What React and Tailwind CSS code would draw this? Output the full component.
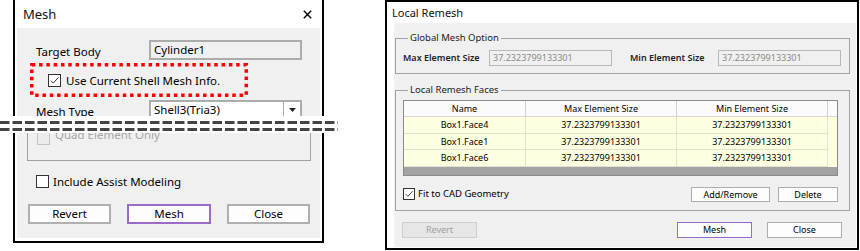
import React from "react";

function Check({ checked = false, disabled = false, size = 13 }) {
  return (
    <div
      className={`shrink-0 flex items-center justify-center border ${
        disabled ? "border-[#c4c4c4] bg-[#ececec]" : "border-[#333333] bg-white"
      }`}
      style={{ width: size, height: size }}
    >
      {checked && (
        <svg width={size - 2} height={size - 2} viewBox="0 0 11 11">
          <path d="M1.8 5.6 L4.3 8.1 L9.4 2.4" fill="none" stroke="#333" strokeWidth="1" />
        </svg>
      )}
    </div>
  );
}

function LButton({ children, purple = false, w }) {
  return (
    <div
      className={`h-[20px] flex items-center justify-center bg-[#fdfdfd] border-2 text-[11.5px] ${
        purple ? "border-[#9a6cc8]" : "border-[#b0b0b0]"
      }`}
      style={{ width: w }}
    >
      {children}
    </div>
  );
}

function RButton({ children, purple = false, disabled = false, w = 75, h = 16 }) {
  return (
    <div
      className={`flex items-center justify-center border text-[9px] ${
        disabled
          ? "border-[#cfcfcf] bg-[#e6e6e6] text-[#a0a0a0]"
          : purple
          ? "border-[#9a6cc8] bg-[#fdfdfd] text-black"
          : "border-[#adadad] bg-[#fdfdfd] text-black"
      }`}
      style={{ width: w, height: h }}
    >
      {children}
    </div>
  );
}

const VAL = "37.2323799133301";
const rows = [
  { name: "Box1.Face4", h: 17 },
  { name: "Box1.Face1", h: 16 },
  { name: "Box1.Face6", h: 17 },
];

export default function App() {
  return (
    <div className="w-[860px] h-[251px] bg-white flex font-['Noto_Sans',sans-serif] text-black overflow-hidden">
      {/* LEFT: Mesh dialog cut in two */}
      <div className="w-[340px] shrink-0 flex flex-col relative">
        {/* upper part */}
        <div className="ml-[13px] w-[311px] h-[116px] border-x-2 border-black px-[2px] flex flex-col">
          <div className="h-[28px] shrink-0 flex items-center justify-between pl-[6px] pr-[8px]">
            <span className="text-[13px] leading-none text-[#111]">Mesh</span>
            <svg width="9" height="9" viewBox="0 0 9 9">
              <path d="M0.8 0.8 L8.2 8.2 M8.2 0.8 L0.8 8.2" stroke="#000" strokeWidth="1.4" />
            </svg>
          </div>
          <div className="flex-1 bg-[#f0f0f0] overflow-hidden flex flex-col text-[11.5px]">
            <div className="mt-[12px] h-[20px] flex items-center pl-[19px]">
              <span className="w-[113px] mt-[4px]">Target Body</span>
              <div className="w-[153px] h-[20px] border-2 border-[#acacac] bg-[#f0f0f0] flex items-center pl-[3px]">
                Cylinder1
              </div>
            </div>
            <div className="mt-[14px] h-[13px] flex items-center pl-[31px] gap-[5px]">
              <Check checked />
              <span>Use Current Shell Mesh Info.</span>
            </div>
            <div className="mt-[13px] h-[20px] flex items-start pl-[19px]">
              <span className="w-[113px] mt-[3px]">Mesh Type</span>
              <div className="w-[153px] h-[20px] border-2 border-[#acacac] bg-white flex items-center">
                <span className="flex-1 pl-[3px]">Shell3(Tria3)</span>
                <div className="w-[17px] h-full border-l border-[#acacac] flex items-center justify-center">
                  <svg width="7" height="4" viewBox="0 0 7 4">
                    <path d="M0 0 L7 0 L3.5 4 Z" fill="#222" />
                  </svg>
                </div>
              </div>
            </div>
          </div>
        </div>

        {/* break band */}
        <div className="h-[17px] shrink-0 bg-white">
          <svg width="338" height="17" viewBox="0 0 338 17">
            <line x1="0" y1="6.5" x2="338" y2="6.5" stroke="#444" strokeWidth="3" strokeDasharray="9.5 3" />
            <line x1="0" y1="13.5" x2="338" y2="13.5" stroke="#444" strokeWidth="3" strokeDasharray="9.5 3" />
          </svg>
        </div>

        {/* lower part */}
        <div className="ml-[13px] w-[311px] h-[110px] border-x-2 border-b-2 border-black px-[2px] pb-[3px]">
          <div className="h-full bg-[#f0f0f0] overflow-hidden flex flex-col text-[11.5px]">
            <div className="ml-[10px] w-[284px] h-[28px] shrink-0 border-x border-b border-[#a0a0a0] flex items-start pl-[9px]">
              <div className="-mt-[1px] flex items-center gap-[5px] text-[#a6a6a6]">
                <Check disabled />
                <span className="-mt-[8px]">Quad Element Only</span>
              </div>
            </div>
            <div className="mt-[14px] h-[13px] flex items-center pl-[19px] gap-[4px]">
              <Check />
              <span>Include Assist Modeling</span>
            </div>
            <div className="mt-[16px] flex pl-[11px] gap-[16px]">
              <LButton w={83}>Revert</LButton>
              <LButton w={84} purple>Mesh</LButton>
              <LButton w={83}>Close</LButton>
            </div>
          </div>
        </div>

        {/* red dotted highlight */}
        <svg className="absolute left-[30px] top-[63px]" width="218" height="34" viewBox="0 0 218 34">
          <rect x="1.75" y="1.75" width="214.5" height="30.5" fill="none" stroke="#ff0000" strokeWidth="3.5" strokeDasharray="3.5 3.8" />
        </svg>
      </div>

      {/* RIGHT: Local Remesh dialog */}
      <div className="ml-[45px] w-[474px] h-[250px] shrink-0 border-2 border-black flex flex-col">
        <div className="h-[21px] shrink-0 flex items-center pl-[5px]">
          <span className="text-[11px] leading-none text-[#111]">Local Remesh</span>
        </div>
        <div className="flex-1 ml-[7px] mr-[1px] mb-[1px] bg-[#f0f0f0] flex flex-col text-[9px] text-black pl-[1px] pr-[6px]">
          {/* Global Mesh Option */}
          <fieldset className="mt-[9px] border border-[#a0a0a0] pl-[7px] pb-[7px]">
            <legend className="ml-[5px] px-[2px] leading-[12px] text-[9.5px] text-[#222]">Global Mesh Option</legend>
            <div className="mt-[6px] h-[16px] flex items-center">
              <span className="w-[86px] font-semibold text-[#222]">Max Element Size</span>
              <div className="w-[123px] h-[16px] border border-[#b8b8b8] bg-[#f0f0f0] flex items-center pl-[3px] text-[#8a8a8a]">
                {VAL}
              </div>
              <span className="ml-[18px] w-[88px] font-semibold text-[#222]">Min Element Size</span>
              <div className="w-[123px] h-[16px] border border-[#b8b8b8] bg-[#f0f0f0] flex items-center pl-[3px] text-[#8a8a8a]">
                {VAL}
              </div>
            </div>
          </fieldset>

          {/* Local Remesh Faces */}
          <fieldset className="mt-[10px] border border-[#a0a0a0] pl-[7px] pr-[11px] pb-[8px]">
            <legend className="ml-[5px] px-[2px] leading-[12px] text-[9.5px] text-[#222]">Local Remesh Faces</legend>
            <div className="mt-[4px] h-[76px] border border-[#8a8a8a] bg-[#a3a3a3] flex flex-col">
              <div className="grid grid-cols-[122px_151px_151px] h-[16px] shrink-0 bg-[#fbfbfb] border-b border-[#d8d8d8]">
                <div className="flex items-center justify-center border-r border-[#d0d0d0]">Name</div>
                <div className="flex items-center justify-center border-r border-[#d0d0d0]">Max Element Size</div>
                <div className="flex items-center justify-center border-r border-[#d0d0d0]">Min Element Size</div>
              </div>
              {rows.map((r) => (
                <div
                  key={r.name}
                  className="grid grid-cols-[122px_151px_151px] shrink-0 bg-[#ffffe1]"
                  style={{ height: r.h }}
                >
                  <div className="flex items-center justify-center border-r border-b border-[#e2e2d0]">{r.name}</div>
                  <div className="flex items-center justify-center border-r border-b border-[#e2e2d0]">{VAL}</div>
                  <div className="flex items-center justify-center border-r border-b border-[#e2e2d0]">{VAL}</div>
                </div>
              ))}
            </div>
            <div className="mt-[11px] h-[15px] flex items-start">
              <div className="flex items-center gap-[3px]">
                <Check checked size={12} />
                <span className="text-[9.5px]">Fit to CAD Geometry</span>
              </div>
              <div className="ml-auto flex gap-[8px]">
                <RButton w={79} h={15}>Add/Remove</RButton>
                <RButton w={60} h={15}>Delete</RButton>
              </div>
            </div>
          </fieldset>

          {/* bottom buttons */}
          <div className="mt-[11px] flex pl-[7px]">
            <RButton disabled>Revert</RButton>
            <div className="ml-auto flex gap-[15px] mr-[8px]">
              <RButton purple>Mesh</RButton>
              <RButton>Close</RButton>
            </div>
          </div>
        </div>
      </div>
    </div>
  );
}
